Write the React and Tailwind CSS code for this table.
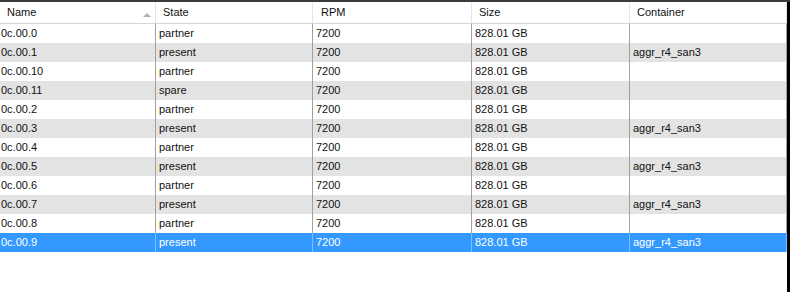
import React from 'react';

const COLS = [
    { key: 'name', title: 'Name', w: 'w-[156px]' },
    { key: 'state', title: 'State', w: 'w-[157px]' },
    { key: 'rpm', title: 'RPM', w: 'w-[159px]' },
    { key: 'size', title: 'Size', w: 'w-[158px]' },
    { key: 'container', title: 'Container', w: 'w-[157px]' },
];

const DISKS = [
    ['0c.00.0', 'partner', '7200', '828.01 GB', ''],
    ['0c.00.1', 'present', '7200', '828.01 GB', 'aggr_r4_san3'],
    ['0c.00.10', 'partner', '7200', '828.01 GB', ''],
    ['0c.00.11', 'spare', '7200', '828.01 GB', ''],
    ['0c.00.2', 'partner', '7200', '828.01 GB', ''],
    ['0c.00.3', 'present', '7200', '828.01 GB', 'aggr_r4_san3'],
    ['0c.00.4', 'partner', '7200', '828.01 GB', ''],
    ['0c.00.5', 'present', '7200', '828.01 GB', 'aggr_r4_san3'],
    ['0c.00.6', 'partner', '7200', '828.01 GB', ''],
    ['0c.00.7', 'present', '7200', '828.01 GB', 'aggr_r4_san3'],
    ['0c.00.8', 'partner', '7200', '828.01 GB', ''],
    ['0c.00.9', 'present', '7200', '828.01 GB', 'aggr_r4_san3'],
];

const SELECTED = 11;

const App = () => {
    return (
        <div className="w-[790px] h-[292px] bg-white border-t-2 border-[#3a3a3a] flex overflow-hidden text-[11px] text-[#111] font-['Liberation_Sans',Arial,sans-serif]">
            <div className="w-[787px] flex flex-col">
                {/* header */}
                <div className="flex h-[22px] border-b border-[#d5d5d5] bg-white">
                    {COLS.map((c, i) => (
                        <div key={c.key} className={`${c.w} h-full border-r border-[#e5e5e5] flex items-center ${i === 2 ? 'pl-[8px]' : 'pl-[7px]'} relative`}>
                            {c.title}
                            {i === 0 && (
                                <svg className="absolute left-[143px] top-[11px]" width="8" height="4" viewBox="0 0 8 4">
                                    <path d="M0 4 L4 0 L8 4 Z" fill="#b0b0b0" />
                                </svg>
                            )}
                        </div>
                    ))}
                </div>

                {/* rows */}
                {DISKS.map((row, r) => {
                    const sel = r === SELECTED;
                    const bg = sel ? 'bg-[#3399ff] text-white' : r % 2 ? 'bg-[#e3e3e3]' : 'bg-white';
                    return (
                        <div key={row[0]} className={`flex h-[19px] ${bg}`}>
                            {row.map((v, i) => (
                                <div key={i} className={`${COLS[i].w} h-full border-r ${sel ? 'border-[#7fbfff]' : 'border-[#a0a0a0]'} flex items-center ${i === 0 ? 'pl-[1px]' : 'pl-[3px]'}`}>
                                    {v}
                                </div>
                            ))}
                        </div>
                    );
                })}
            </div>
            <div className="w-[3px] bg-black" />
        </div>
    );
};

export default App;
